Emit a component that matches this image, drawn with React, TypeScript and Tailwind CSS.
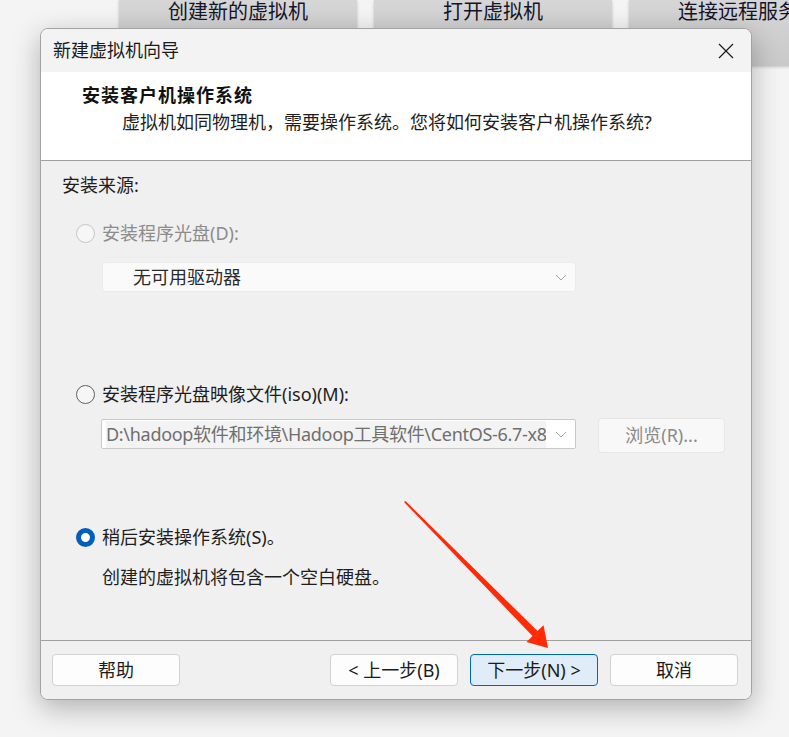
import React from "react";

const font = { fontFamily: '"Noto Sans", "Noto Sans CJK SC", sans-serif' };

const Chevron: React.FC = () => (
  <svg width="12" height="7" viewBox="0 0 12 7" className="shrink-0">
    <path d="M1 1 L6 6 L11 1" fill="none" stroke="#a6a6a6" strokeWidth="1" />
  </svg>
);

const Radio: React.FC<{ state: "disabled" | "off" | "on" }> = ({ state }) => {
  if (state === "on") {
    return <span className="block w-[19px] h-[19px] rounded-full border-[5px] border-[#005fb8] bg-white shrink-0" />;
  }
  if (state === "disabled") {
    return <span className="block w-[19px] h-[19px] rounded-full border border-[#c6c6c6] bg-[#f6f6f6] shrink-0" />;
  }
  return <span className="block w-[19px] h-[19px] rounded-full border border-[#5f5f5f] bg-[#f6f6f6] shrink-0" />;
};

const FooterButton: React.FC<{ label: string; primary?: boolean }> = ({ label, primary }) => (
  <button
    className={
      primary
        ? "w-[128px] h-[32px] rounded-[4px] border border-[#0067c0] bg-[#e0ecf8] text-[18px] text-[#1b1b1b] leading-none"
        : "w-[128px] h-[32px] rounded-[4px] border border-[#d2d2d2] bg-[#fdfdfd] text-[18px] text-[#1b1b1b] leading-none"
    }
  >
    {label}
  </button>
);

export default function App() {
  return (
    <div className="relative w-[789px] h-[737px] overflow-hidden bg-[#f4f4f4]" style={font}>
      {/* toolbar behind the wizard */}
      <div className="flex gap-[17px] pl-[119px]">
        <div className="w-[238px] h-[66px] shrink-0 bg-gradient-to-b from-[#d6d6d6] to-[#c9c9c9] shadow-[0_1px_3px_rgba(0,0,0,0.2)] flex justify-center pt-[1px]">
          <span className="text-[20px] leading-[22px] text-[#14142a]">创建新的虚拟机</span>
        </div>
        <div className="w-[238px] h-[66px] shrink-0 bg-gradient-to-b from-[#d6d6d6] to-[#c9c9c9] shadow-[0_1px_3px_rgba(0,0,0,0.2)] flex justify-center pt-[1px]">
          <span className="text-[20px] leading-[22px] text-[#14142a]">打开虚拟机</span>
        </div>
        <div className="w-[238px] h-[66px] shrink-0 bg-gradient-to-b from-[#d6d6d6] to-[#c9c9c9] shadow-[0_1px_3px_rgba(0,0,0,0.2)] flex justify-center pt-[1px]">
          <span className="text-[20px] leading-[22px] text-[#14142a] whitespace-nowrap">连接远程服务器</span>
        </div>
      </div>

      {/* wizard window */}
      <div className="absolute left-[40px] top-[28px] w-[712px] h-[672px] rounded-[8px] border border-[#a3a3a3] bg-[#f0f0f0] overflow-hidden shadow-[0_8px_28px_rgba(0,0,0,0.28)] flex flex-col">
        <div className="h-[43px] shrink-0 bg-[#f3f3f3] flex items-center justify-between pl-[12px] pr-[17px]">
          <span className="text-[18px] text-[#1a1a1a]">新建虚拟机向导</span>
          <svg width="16" height="16" viewBox="0 0 16 16">
            <path d="M1 1 L15 15 M15 1 L1 15" stroke="#1a1a1a" strokeWidth="1.2" />
          </svg>
        </div>

        <div className="h-[89px] shrink-0 bg-white border-b border-[#a0a0a0] pt-[11px]">
          <div className="pl-[41px] text-[18px] leading-[24px] font-bold tracking-[1px] text-[#111]">安装客户机操作系统</div>
          <div className="pl-[81px] mt-[3px] text-[18px] leading-[24px] text-[#1e1e1e]">
            虚拟机如同物理机，需要操作系统。您将如何安装客户机操作系统?
          </div>
        </div>

        <div className="flex-1 bg-[#f0f0f0] border-b border-[#a0a0a0] pt-[12px]">
          <div className="pl-[21px] text-[18px] leading-[24px] text-[#1e1e1e]">安装来源:</div>

          <div className="mt-[24px] pl-[35px] flex items-center gap-[7px] h-[24px]">
            <Radio state="disabled" />
            <span className="text-[18px] text-[#8c8c8c]">安装程序光盘(D):</span>
          </div>
          <div className="mt-[17px] ml-[61px] w-[474px] h-[30px] bg-[#fafafa] border border-[#ececec] rounded-[3px] flex items-center pl-[30px] pr-[8px]">
            <span className="flex-1 text-[18px] text-[#2b2b2b]">无可用驱动器</span>
            <Chevron />
          </div>

          <div className="mt-[90px] pl-[35px] flex items-center gap-[7px] h-[24px]">
            <Radio state="off" />
            <span className="text-[18px] text-[#1e1e1e]">安装程序光盘映像文件(iso)(M):</span>
          </div>
          <div className="mt-[12px] ml-[60px] flex items-start gap-[22px]">
            <div className="mt-[1px] w-[475px] h-[30px] bg-white border border-[#c9c9c9] rounded-[2px] flex items-center pl-[4px] pr-[8px] overflow-hidden">
              <div className="w-[440px] shrink-0 overflow-hidden bg-[#f3f3f3]">
                <span className="block whitespace-nowrap text-[18px] tracking-[-0.3px] text-[#6f6f6f]">
                  D:\hadoop软件和环境\Hadoop工具软件\CentOS-6.7-x86
                </span>
              </div>
              <span className="flex-1" />
              <Chevron />
            </div>
            <button className="w-[127px] h-[35px] rounded-[4px] border border-[#e6e6e6] bg-[#f8f8f8] text-[18px] text-[#8a8a8a]">
              浏览(R)...
            </button>
          </div>

          <div className="mt-[72px] pl-[35px] flex items-center gap-[7px] h-[24px]">
            <Radio state="on" />
            <span className="text-[18px] text-[#1e1e1e]">稍后安装操作系统(S)。</span>
          </div>
          <div className="mt-[16px] pl-[61px] text-[18px] leading-[24px] text-[#1e1e1e]">创建的虚拟机将包含一个空白硬盘。</div>
        </div>

        <div className="h-[58px] shrink-0 bg-[#f0f0f0] flex items-start pt-[13px] pl-[11px] pr-[13px]">
          <FooterButton label="帮助" />
          <div className="flex-1" />
          <div className="flex gap-[12px]">
            <FooterButton label="< 上一步(B)" />
            <FooterButton label="下一步(N) >" primary />
            <FooterButton label="取消" />
          </div>
        </div>
      </div>

      {/* red annotation arrow */}
      <svg className="absolute left-0 top-0 pointer-events-none" width="789" height="737" viewBox="0 0 789 737">
        <polygon
          points="404,502 405.5,501 537.5,631.1 543.5,625.2 548,648 526.5,642 532.5,636.1"
          fill="#ff2a06"
        />
      </svg>
    </div>
  );
}
